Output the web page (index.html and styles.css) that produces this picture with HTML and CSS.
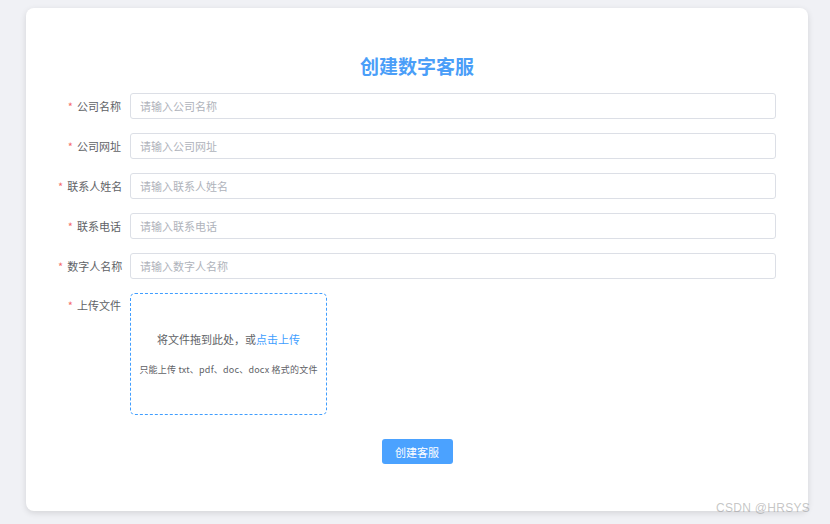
FILE: index.html
```html
<!DOCTYPE html>
<html lang="zh">
<head>
<meta charset="utf-8">
<title>创建数字客服</title>
<link rel="stylesheet" href="styles.css">
</head>
<body>
<div class="card">
  <h2 class="title">创建数字客服</h2>
  <form class="form">
    <div class="row">
      <label class="label"><span class="star">*</span>公司名称</label>
      <input class="input" type="text" placeholder="请输入公司名称">
    </div>
    <div class="row">
      <label class="label"><span class="star">*</span>公司网址</label>
      <input class="input" type="text" placeholder="请输入公司网址">
    </div>
    <div class="row">
      <label class="label"><span class="star">*</span>联系人姓名</label>
      <input class="input" type="text" placeholder="请输入联系人姓名">
    </div>
    <div class="row">
      <label class="label"><span class="star">*</span>联系电话</label>
      <input class="input" type="text" placeholder="请输入联系电话">
    </div>
    <div class="row">
      <label class="label"><span class="star">*</span>数字人名称</label>
      <input class="input" type="text" placeholder="请输入数字人名称">
    </div>
    <div class="row row-upload">
      <label class="label"><span class="star">*</span>上传文件</label>
      <div class="upload">
        <div class="upload-text">将文件拖到此处，或<em>点击上传</em></div>
        <div class="upload-tip">只能上传 txt、pdf、doc、docx 格式的文件</div>
      </div>
    </div>
    <div class="actions">
      <button class="btn" type="button">创建客服</button>
    </div>
  </form>
</div>
<div class="watermark">CSDN @HRSYS</div>
</body>
</html>
```
FILE: styles.css
```css
html, body {
  margin: 0;
  padding: 0;
}
body {
  background: #f0f1f5;
  font-family: "Noto Sans CJK SC", "Noto Sans", sans-serif;
  width: 830px;
  height: 524px;
  position: relative;
  overflow: hidden;
}
.card {
  box-sizing: border-box;
  margin: 8px 0 0 26px;
  width: 782px;
  height: 503px;
  background: #fff;
  border-radius: 8px;
  box-shadow: 0 2px 6px rgba(0, 0, 0, 0.12);
  padding-top: 46px;
}
.title {
  margin: 0 0 15px;
  text-align: center;
  font-size: 19px;
  line-height: 24px;
  font-weight: 700;
  color: #4a9ef8;
}
.form {
  padding: 0 32px;
}
.row {
  display: flex;
  align-items: center;
  margin-bottom: 14px;
}
.row-upload {
  align-items: flex-start;
}
.label {
  box-sizing: border-box;
  width: 72px;
  flex: none;
  padding-right: 9px;
  text-align: right;
  font-size: 11px;
  line-height: 26px;
  color: #606266;
  white-space: nowrap;
}
.star {
  color: #f56c6c;
  margin-right: 4px;
}
.row-upload .label {
  line-height: 24px;
}
.input {
  box-sizing: border-box;
  flex: 1;
  height: 26px;
  border: 1px solid #dcdfe6;
  border-radius: 3px;
  padding: 0 9px;
  font-family: inherit;
  font-size: 11px;
  color: #606266;
  outline: none;
  background: #fff;
}
.input::placeholder {
  color: #afb3bb;
}
.upload {
  box-sizing: border-box;
  width: 197px;
  height: 122px;
  border: 1px dashed #409eff;
  border-radius: 5px;
  display: flex;
  flex-direction: column;
  align-items: center;
  padding-top: 37px;
}
.upload-text {
  font-size: 11px;
  line-height: 16px;
  color: #606266;
}
.upload-text em {
  font-style: normal;
  color: #409eff;
}
.upload-tip {
  margin-top: 17px;
  font-size: 9px;
  line-height: 12px;
  letter-spacing: 0.2px;
  color: #606266;
  white-space: nowrap;
}
.actions {
  display: flex;
  justify-content: center;
  margin-top: 24px;
}
.btn {
  width: 71px;
  height: 25px;
  border: none;
  border-radius: 3px;
  background: #4ba2ff;
  color: #fff;
  font-family: inherit;
  font-size: 11px;
  padding: 0;
  cursor: pointer;
}
.watermark {
  position: absolute;
  left: 716px;
  top: 501px;
  font-family: "Liberation Sans", sans-serif;
  font-size: 12px;
  line-height: 15px;
  color: rgba(150, 150, 150, 0.55);
  letter-spacing: 0.3px;
}
```
